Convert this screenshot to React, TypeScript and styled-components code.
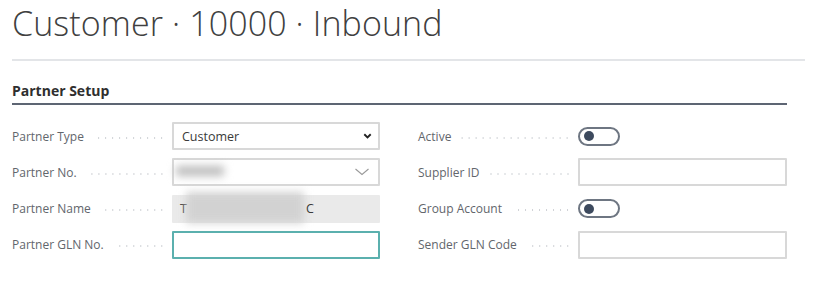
import styled, { createGlobalStyle } from "styled-components";

const GlobalStyle = createGlobalStyle`
  html, body {
    margin: 0;
    padding: 0;
    background: #ffffff;
  }
  body {
    font-family: "Open Sans", "Segoe UI", sans-serif;
  }
`;

const Page = styled.div`
  width: 840px;
  height: 303px;
  padding: 0 35px 0 12px;
  box-sizing: border-box;
  overflow: hidden;
`;

const Title = styled.h1`
  margin: 0;
  padding-top: 2px;
  font-weight: 300;
  font-size: 34px;
  line-height: 43px;
  color: #404040;
  letter-spacing: 0.1px;
`;

const Divider = styled.div`
  margin-top: 14px;
  height: 2px;
  background: #e3e5e8;
`;

const Section = styled.section`
  width: 775px;
  margin-top: 18px;
`;

const SectionHeader = styled.h2`
  margin: 0;
  font-size: 14px;
  font-weight: 700;
  line-height: 24px;
  color: #2f2f2f;
  border-bottom: 2px solid #5d6573;
`;

const Columns = styled.div`
  display: grid;
  grid-template-columns: 368px 369px;
  column-gap: 38px;
  margin-top: 17px;
`;

const Column = styled.div`
  display: flex;
  flex-direction: column;
  gap: 8.3px;
`;

const Row = styled.div`
  display: flex;
  align-items: center;
  height: 28px;
`;

const Label = styled.div`
  width: 160px;
  flex: none;
  display: flex;
  align-items: center;
  font-size: 12px;
  color: #62666c;
  white-space: nowrap;
`;

const Leader = styled.span`
  flex: 1;
  height: 2px;
  margin: 3px 7px 0 10px;
  background-image: radial-gradient(circle, #cfd2d6 0.8px, transparent 1px);
  background-size: 7px 2px;
  background-repeat: repeat-x;
  background-position: right center;
`;

const Box = styled.div<{ $variant?: "plain" | "focus" | "readonly" }>`
  position: relative;
  flex: 1;
  height: 28px;
  box-sizing: border-box;
  display: flex;
  align-items: center;
  padding: 0 8px;
  font-size: 12.5px;
  color: #3a3a3a;
  border: ${(p) =>
    p.$variant === "focus"
      ? "2px solid #5bb0ae"
      : p.$variant === "readonly"
      ? "none"
      : "2px solid #d8d8d8"};
  background: ${(p) => (p.$variant === "readonly" ? "#eaeaea" : "#fff")};
  border-radius: 1px;
`;

const Chevron = styled.svg<{ $right: number }>`
  position: absolute;
  right: ${(p) => p.$right}px;
  top: 50%;
  transform: translateY(-50%);
`;

const Smudge = styled.div<{ $left: number; $top: number; $w: number; $h: number; $c: string }>`
  position: absolute;
  left: ${(p) => p.$left}px;
  top: ${(p) => p.$top}px;
  width: ${(p) => p.$w}px;
  height: ${(p) => p.$h}px;
  background: ${(p) => p.$c};
  filter: blur(4px);
`;

const Trailing = styled.span<{ $left: number }>`
  position: absolute;
  left: ${(p) => p.$left}px;
`;

const Toggle = styled.div`
  width: 42px;
  height: 19px;
  box-sizing: border-box;
  border: 2px solid #6e7682;
  border-radius: 10px;
  display: flex;
  align-items: center;
  padding-left: 4px;
`;

const Knob = styled.span`
  width: 10px;
  height: 10px;
  border-radius: 50%;
  background: #3d4a5e;
`;

export default function App() {
  return (
    <>
      <GlobalStyle />
      <Page>
        <Title>Customer · 10000 · Inbound</Title>
        <Divider />
        <Section>
          <SectionHeader>Partner Setup</SectionHeader>
          <Columns>
            <Column>
              <Row>
                <Label>
                  Partner Type
                  <Leader />
                </Label>
                <Box>
                  Customer
                  <Chevron $right={6} width="9" height="7" viewBox="0 0 9 7">
                    <path d="M1.3 1.8 L4.5 4.9 L7.7 1.8" fill="none" stroke="#222" strokeWidth="1.9" />
                  </Chevron>
                </Box>
              </Row>
              <Row>
                <Label>
                  Partner No.
                  <Leader />
                </Label>
                <Box>
                  <Smudge $left={2} $top={6} $w={48} $h={10} $c="#bcbcbc" />
                  <Chevron $right={8} width="16" height="10" viewBox="0 0 16 10">
                    <path d="M1.5 2 L8 7.5 L14.5 2" fill="none" stroke="#9a9a9a" strokeWidth="1.1" />
                  </Chevron>
                </Box>
              </Row>
              <Row>
                <Label>
                  Partner Name
                  <Leader />
                </Label>
                <Box $variant="readonly">
                  T
                  <Smudge $left={14} $top={-3} $w={118} $h={31} $c="#d2d2d2" />
                  <Trailing $left={134}>C</Trailing>
                </Box>
              </Row>
              <Row>
                <Label>
                  Partner GLN No.
                  <Leader />
                </Label>
                <Box $variant="focus" />
              </Row>
            </Column>
            <Column>
              <Row>
                <Label>
                  Active
                  <Leader />
                </Label>
                <Toggle>
                  <Knob />
                </Toggle>
              </Row>
              <Row>
                <Label>
                  Supplier ID
                  <Leader />
                </Label>
                <Box />
              </Row>
              <Row>
                <Label>
                  Group Account
                  <Leader />
                </Label>
                <Toggle>
                  <Knob />
                </Toggle>
              </Row>
              <Row>
                <Label>
                  Sender GLN Code
                  <Leader />
                </Label>
                <Box />
              </Row>
            </Column>
          </Columns>
        </Section>
      </Page>
    </>
  );
}
